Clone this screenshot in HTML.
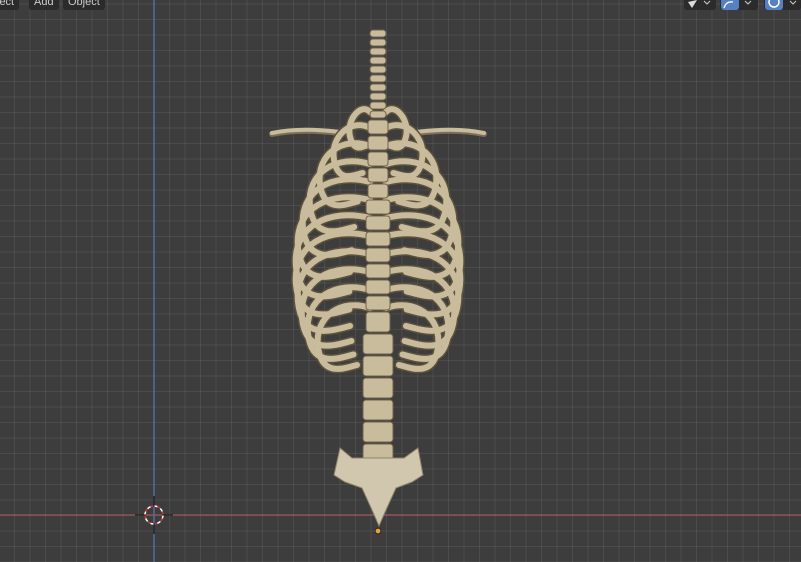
<!DOCTYPE html>
<html><head><meta charset="utf-8"><style>
html,body{margin:0;padding:0}
body{width:801px;height:562px;overflow:hidden;background:#3d3d3d;position:relative;font-family:"Liberation Sans",sans-serif}
.grid{position:absolute;inset:0;
background-image:
linear-gradient(to right, rgba(255,255,255,0.07) 1px, transparent 1px),
linear-gradient(to bottom, rgba(255,255,255,0.07) 1px, transparent 1px);
background-size:15.5px 15.5px;background-position:14px 3.5px}
.menu{position:absolute;top:-6px;height:16px;background:#2b2b2b;color:#ccc;font-size:11px;line-height:16px;padding:0 5px;border-radius:3px}
.tb{position:absolute;top:-5px;height:15px;background:#2b2b2b;border-radius:3px}
</style></head><body>
<div class="grid"></div>
<svg width="801" height="562" style="position:absolute;left:0;top:0">
<line x1="154" y1="0" x2="154" y2="562" stroke="#5a79b8" stroke-width="1.2"/>
<line x1="0" y1="515" x2="801" y2="515" stroke="#a1545b" stroke-width="1.2"/>
<circle cx="154" cy="515" r="9" fill="none" stroke="#fff" stroke-width="1.5" stroke-dasharray="4 3"/>
<circle cx="154" cy="515" r="9" fill="none" stroke="#c33" stroke-width="1.5" stroke-dasharray="3 4" stroke-dashoffset="3.5"/>
<line x1="135" y1="515" x2="146" y2="515" stroke="#111"/><line x1="162" y1="515" x2="173" y2="515" stroke="#111"/>
<line x1="154" y1="496" x2="154" y2="507" stroke="#111"/><line x1="154" y1="523" x2="154" y2="534" stroke="#111"/>
<g id="sk"></g>
<circle cx="378" cy="531" r="2.8" fill="#f0a030" stroke="#222" stroke-width="0.8"/>
</svg>
<div class="menu" style="left:-8px">ject</div>
<div class="menu" style="left:29px">Add</div>
<div class="menu" style="left:63px">Object</div>
<div class="tb" style="left:684px;width:32px"></div>
<div class="tb" style="left:720px;width:38px"></div>
<div class="tb" style="left:721px;width:18px;background:#5680c2"></div>
<div class="tb" style="left:764px;width:37px"></div>
<div class="tb" style="left:765px;width:18px;background:#5680c2"></div>
<svg width="801" height="12" style="position:absolute;left:0;top:0">
<path d="M688 2 L697 0 L692 8 Z" fill="#ddd"/>
<path d="M704 1 L707 4 L710 1" stroke="#ccc" fill="none"/>
<path d="M724 8 Q726 1 733 2" stroke="#fff" fill="none" stroke-width="1.2"/>
<path d="M745 1 L748 4 L751 1" stroke="#ccc" fill="none"/>
<circle cx="774" cy="2" r="5" fill="none" stroke="#fff" stroke-width="1.5"/>
<path d="M790 1 L793 4 L796 1" stroke="#ccc" fill="none"/>
</svg>
<script>
var g=document.getElementById('sk'),s='';
var C='#c8bc9c',D='#5f523c';
s+='<path d="M272 134 Q300 128 340 133 M484 134 Q456 128 416 133" stroke="#7d7058" stroke-width="6" fill="none" stroke-linecap="round"/>';
s+='<path d="M272 133 Q300 127 340 132 M484 133 Q456 127 416 132" stroke="'+C+'" stroke-width="4" fill="none" stroke-linecap="round"/>';
var ribs=[[112,28],[128,44],[146,58],[164,68],[182,75],[200,80],[218,82],[236,82],[254,80],[272,76],[290,70],[308,60]];
for(var k=0;k<2;k++){
ribs.forEach(function(r){var y=r[0],w=r[1];
[1,-1].forEach(function(d){
var x0=378+d*8,x1=378+d*w,ym=y+w*0.45+12;
var p='M'+x0+' '+y+' C'+(378+d*w*0.6)+' '+(y-10)+' '+(x1+d*4)+' '+(y+8)+' '+x1+' '+ym+' S'+(378+d*w*0.55)+' '+(ym+w*0.35)+' '+(378+d*w*0.35)+' '+(ym+w*0.3);
s+='<path d="'+p+'" stroke="'+(k?C:D)+'" stroke-width="'+(k?6:9)+'" fill="none" stroke-linecap="round"/>';
});});}
for(var y=30;y<445;){var h=y<120?9:(y<300?16:22),w=y<120?16:(y<200?20:(y<330?24:30));
s+='<rect x="'+(378-w/2)+'" y="'+y+'" width="'+w+'" height="'+(h-2)+'" rx="3" fill="'+C+'" stroke="#6f624a" stroke-width="1"/>';y+=h;}
s+='<path d="M340 448 L352 458 L404 458 L418 448 L423 475 L412 482 L396 488 L386 510 L379 526 L372 510 L362 488 L345 482 L334 475 Z" fill="#d0c7ae" stroke="#8f8266" stroke-width="1"/>';
g.innerHTML=s;
</script>
</body></html>
